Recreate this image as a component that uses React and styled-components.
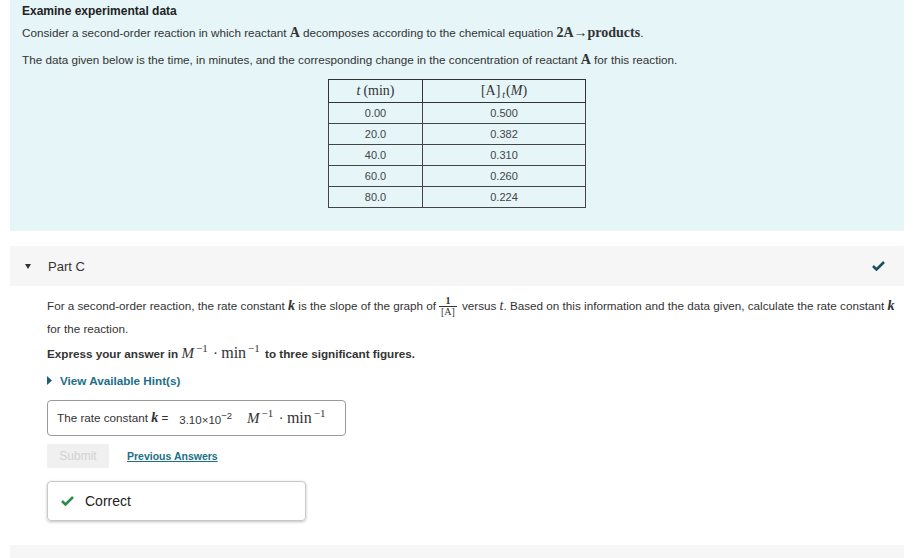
import React from "react";
import styled, { createGlobalStyle } from "styled-components";

const rows = [
  ["0.00", "0.500"],
  ["20.0", "0.382"],
  ["40.0", "0.310"],
  ["60.0", "0.260"],
  ["80.0", "0.224"],
];

export default function App() {
  return (
    <>
      <GlobalStyle />
      <Page>
        <IntroPanel>
          <IntroTitle>Examine experimental data</IntroTitle>
          <IntroText>
            Consider a second-order reaction in which reactant <Math bold>A</Math> decomposes
            according to the chemical equation <Math bold>2A→products</Math>.
          </IntroText>
          <IntroText last>
            The data given below is the time, in minutes, and the corresponding change in the
            concentration of reactant <Math bold>A</Math> for this reaction.
          </IntroText>
          <DataTable>
            <thead>
              <tr>
                <HeadCell narrow>
                  <Math italic>t</Math> <Math>(min)</Math>
                </HeadCell>
                <HeadCell>
                  <Math>[A]</Math>
                  <Sub>t</Sub>
                  <Math>(</Math>
                  <Math italic>M</Math>
                  <Math>)</Math>
                </HeadCell>
              </tr>
            </thead>
            <tbody>
              {rows.map(([t, a]) => (
                <tr key={t}>
                  <Cell>{t}</Cell>
                  <Cell>{a}</Cell>
                </tr>
              ))}
            </tbody>
          </DataTable>
        </IntroPanel>

        <PartHeader>
          <Caret width="6" height="5" viewBox="0 0 6 5">
            <path d="M0 0h6L3 5z" fill="#333" />
          </Caret>
          <PartTitle>Part C</PartTitle>
          <svg width="13" height="10" viewBox="0 0 13 10">
            <path d="M1 5l3.5 3.5L12 1" stroke="#1c4f5c" strokeWidth="2.6" fill="none" />
          </svg>
        </PartHeader>

        <PartBody>
          <Question>
            For a second-order reaction, the rate constant <Math italic bold>k</Math> is the
            slope of the graph of
            <Fraction>
              <Num>1</Num>
              <Den>[A]</Den>
            </Fraction>
            versus <Math italic>t</Math>. Based on this information and the data given, calculate
            the rate constant <Math italic bold>k</Math> for the reaction.
          </Question>
          <Instruction>
            Express your answer in <Math italic size="15px">M</Math>
            <Sup>−1</Sup> <Math size="15px">·</Math> <Math size="16px">min</Math>
            <Sup>−1</Sup> to three significant figures.
          </Instruction>
          <HintLink>
            <svg width="5" height="9" viewBox="0 0 5 9">
              <path d="M0 0l5 4.5L0 9z" fill="#1c5f73" />
            </svg>
            View Available Hint(s)
          </HintLink>

          <AnswerBox>
            <span>
              The rate constant <Math italic bold>k</Math> =
            </span>
            <AnswerValue>
              3.10×10<SmallSup>−2</SmallSup>
            </AnswerValue>
            <Unit>
              <Math italic size="15px">M</Math>
              <Sup>−1</Sup> · <Math size="16px">min</Math>
              <Sup>−1</Sup>
            </Unit>
          </AnswerBox>

          <Actions>
            <SubmitButton disabled>Submit</SubmitButton>
            <PrevLink>Previous Answers</PrevLink>
          </Actions>

          <Feedback>
            <svg width="13" height="10" viewBox="0 0 13 10">
              <path d="M1 5l3.5 3.5L12 1" stroke="#2e8b4e" strokeWidth="2.6" fill="none" />
            </svg>
            Correct
          </Feedback>
        </PartBody>

        <NextPart />
      </Page>
    </>
  );
}

const GlobalStyle = createGlobalStyle`
  body {
    margin: 0;
    background: #ffffff;
    font-family: "Liberation Sans", Arial, sans-serif;
    font-size: 11.7px;
    color: #333333;
  }
`;

const Page = styled.div`
  width: 894px;
  padding-left: 10px;
  display: flex;
  flex-direction: column;
`;

const IntroPanel = styled.div`
  background: #e5f5f8;
  padding: 0 12px 23px 12px;
  display: flex;
  flex-direction: column;
`;

const IntroTitle = styled.div`
  font-size: 12px;
  font-weight: bold;
  color: #222;
  line-height: 22px;
`;

const IntroText = styled.p`
  margin: ${(p) => (p.last ? "9px 0 10px" : "2px 0 0")};
  line-height: 18px;
  color: #333;
`;

const Math = styled.span`
  font-family: "Liberation Serif", "Times New Roman", serif;
  font-style: ${(p) => (p.italic ? "italic" : "normal")};
  font-weight: ${(p) => (p.bold ? "bold" : "normal")};
  font-size: ${(p) => p.size || "14px"};
  line-height: 1;
`;

const Sub = styled.sub`
  font-family: "Liberation Serif", "Times New Roman", serif;
  font-style: italic;
  font-size: 10px;
  vertical-align: -3px;
  line-height: 0;
  margin: 0 1px 0 2px;
`;

const Sup = styled.sup`
  font-family: "Liberation Serif", "Times New Roman", serif;
  font-size: 11px;
  font-weight: normal;
  vertical-align: 6px;
  line-height: 0;
  padding: 0 2px 0 2px;
`;

const SmallSup = styled.sup`
  font-size: 9.5px;
  vertical-align: 5px;
  line-height: 0;
`;

const DataTable = styled.table`
  align-self: center;
  width: 258px;
  border-collapse: collapse;
  border: 1px solid #333;
  font-size: 11px;
`;

const HeadCell = styled.th`
  width: ${(p) => (p.narrow ? "93px" : "auto")};
  height: 22px;
  padding: 0;
  border: 1px solid #333;
  font-weight: normal;
  text-align: center;
  color: #333;
`;

const Cell = styled.td`
  height: 20px;
  padding: 0;
  border: 1px solid #444;
  text-align: center;
  color: #444;
`;

const PartHeader = styled.div`
  margin-top: 15px;
  height: 40px;
  background: #f6f6f6;
  display: flex;
  align-items: center;
  padding: 0 19px 0 15px;
`;

const Caret = styled.svg`
  margin-right: 17px;
`;

const PartTitle = styled.div`
  flex: 1;
  font-size: 13px;
  color: #333;
`;

const PartBody = styled.div`
  padding: 8px 0 0 37px;
  display: flex;
  flex-direction: column;
  align-items: flex-start;
`;

const Question = styled.p`
  margin: 0;
  width: 860px;
  line-height: 23px;
  color: #333;
`;

const Fraction = styled.span`
  display: inline-flex;
  flex-direction: column;
  align-items: center;
  vertical-align: 6px;
  font-family: "Liberation Serif", "Times New Roman", serif;
  font-size: 10px;
  line-height: 10px;
  margin: 0 6px 0 4px;
`;

const Num = styled.span`
  font-weight: bold;
  border-bottom: 1px solid #333;
  padding: 0 1px;
  width: 100%;
  text-align: center;
`;

const Den = styled.span`
  padding: 0 1px;
`;

const Instruction = styled.div`
  margin-top: 2px;
  font-weight: bold;
  color: #333;
  line-height: 23px;
`;

const HintLink = styled.div`
  margin-top: 4px;
  display: flex;
  align-items: center;
  gap: 8px;
  color: #1c6f86;
  font-weight: bold;
  line-height: 23px;
`;

const AnswerBox = styled.div`
  margin-top: 8px;
  width: 299px;
  height: 36px;
  box-sizing: border-box;
  border: 1px solid #9a9a9a;
  border-radius: 4px;
  display: flex;
  align-items: center;
  padding-left: 9px;
  color: #333;
`;

const AnswerValue = styled.span`
  margin-left: 11px;
  font-size: 11.5px;
  margin-top: 3px;
`;

const Unit = styled.span`
  margin-left: 15px;
  font-family: "Liberation Serif", "Times New Roman", serif;
  font-size: 14px;
`;

const Actions = styled.div`
  margin-top: 8px;
  display: flex;
  align-items: center;
  gap: 18px;
`;

const SubmitButton = styled.button`
  width: 62px;
  height: 24px;
  border: none;
  background: #f0f0f0;
  color: #d2d2d2;
  font-family: "Liberation Sans", Arial, sans-serif;
  font-size: 12px;
  padding: 0;
`;

const PrevLink = styled.a`
  color: #1c6f86;
  font-weight: bold;
  font-size: 10.5px;
  text-decoration: underline;
`;

const Feedback = styled.div`
  margin-top: 13px;
  width: 259px;
  height: 40px;
  box-sizing: border-box;
  border: 1px solid #c8c8c8;
  border-radius: 4px;
  box-shadow: 0 1px 3px rgba(0, 0, 0, 0.25);
  display: flex;
  align-items: center;
  gap: 11px;
  padding-left: 13px;
  font-size: 14px;
  color: #222;
`;

const NextPart = styled.div`
  margin-top: 24px;
  height: 20px;
  background: #f6f6f6;
`;
